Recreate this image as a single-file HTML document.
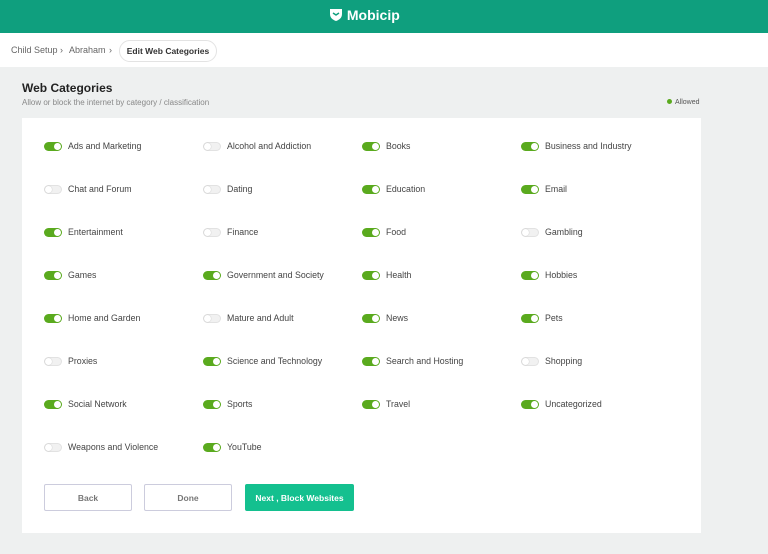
<!DOCTYPE html>
<html><head><style>
body{margin:0;width:768px;height:554px;background:#eef0f0;font-family:"Liberation Sans",sans-serif;position:relative;overflow:hidden}
.hd{position:absolute;left:0;top:0;width:768px;height:33px;background:#0f9f7e}
.logo{position:absolute;left:329px;top:7px;color:#fff;font-weight:bold;font-size:14px}
.bc{position:absolute;left:0;top:33px;width:768px;height:34px;background:#fff}
.bc span{position:absolute;top:12px;font-size:9px;color:#666}
.pill{position:absolute;left:119px;top:7px;width:96px;height:20px;border:1px solid #e3e3e3;border-radius:11px;font-size:8.5px;font-weight:bold;color:#333;text-align:center;line-height:20px}
h1{position:absolute;left:22px;top:81px;margin:0;font-size:12px;color:#222}
.sub{position:absolute;left:22px;top:98px;font-size:8px;color:#888}
.al{position:absolute;left:667px;top:99px;font-size:7px;color:#555}
.al:before{content:"";display:inline-block;width:5px;height:5px;border-radius:50%;background:#5aaa1e;margin-right:3px}
.card{position:absolute;left:22px;top:118px;width:679px;height:415px;background:#fff}
.it{position:absolute;font-size:8.8px;color:#444;height:12px;line-height:11px}
.t{position:absolute;left:-24px;top:1px;width:18px;height:9px;border-radius:5px;background:#5aaa1e}
.t:after{content:"";position:absolute;right:1px;top:1px;width:7px;height:7px;border-radius:50%;background:#fff}
.off{background:#f1f1f1;border:1px solid #e2e2e2;width:16px;height:7px}
.off:after{left:0;top:0;right:auto;box-shadow:0 0 1px #aaa}
.btn{position:absolute;top:484px;height:27px;line-height:27px;text-align:center;font-size:8.5px;font-weight:bold;border:1px solid #ccd;border-radius:2px;color:#777;background:#fff;box-sizing:border-box}
</style></head><body>
<div class="hd"><div class="logo"><svg width="14" height="13" style="vertical-align:-1px" viewBox="0 0 14 13"><path d="M1 1h12v5c0 4-3 6-6 7C4 12 1 10 1 6z" fill="#fff"/><path d="M4 5l3 2 3-2" stroke="#0f9f7e" stroke-width="1.5" fill="none"/></svg> Mobicip</div></div>
<div class="bc"><span style="left:11px">Child Setup</span><span style="left:60px">›</span><span style="left:69px">Abraham</span><span style="left:109px">›</span><div class="pill">Edit Web Categories</div></div>
<h1>Web Categories</h1>
<div class="sub">Allow or block the internet by category / classification</div>
<div class="al">Allowed</div>
<div class="card"></div>
<div class="it" style="left:68px;top:141px"><i class="t"></i>Ads and Marketing</div>
<div class="it" style="left:227px;top:141px"><i class="t off"></i>Alcohol and Addiction</div>
<div class="it" style="left:386px;top:141px"><i class="t"></i>Books</div>
<div class="it" style="left:545px;top:141px"><i class="t"></i>Business and Industry</div>
<div class="it" style="left:68px;top:184px"><i class="t off"></i>Chat and Forum</div>
<div class="it" style="left:227px;top:184px"><i class="t off"></i>Dating</div>
<div class="it" style="left:386px;top:184px"><i class="t"></i>Education</div>
<div class="it" style="left:545px;top:184px"><i class="t"></i>Email</div>
<div class="it" style="left:68px;top:227px"><i class="t"></i>Entertainment</div>
<div class="it" style="left:227px;top:227px"><i class="t off"></i>Finance</div>
<div class="it" style="left:386px;top:227px"><i class="t"></i>Food</div>
<div class="it" style="left:545px;top:227px"><i class="t off"></i>Gambling</div>
<div class="it" style="left:68px;top:270px"><i class="t"></i>Games</div>
<div class="it" style="left:227px;top:270px"><i class="t"></i>Government and Society</div>
<div class="it" style="left:386px;top:270px"><i class="t"></i>Health</div>
<div class="it" style="left:545px;top:270px"><i class="t"></i>Hobbies</div>
<div class="it" style="left:68px;top:313px"><i class="t"></i>Home and Garden</div>
<div class="it" style="left:227px;top:313px"><i class="t off"></i>Mature and Adult</div>
<div class="it" style="left:386px;top:313px"><i class="t"></i>News</div>
<div class="it" style="left:545px;top:313px"><i class="t"></i>Pets</div>
<div class="it" style="left:68px;top:356px"><i class="t off"></i>Proxies</div>
<div class="it" style="left:227px;top:356px"><i class="t"></i>Science and Technology</div>
<div class="it" style="left:386px;top:356px"><i class="t"></i>Search and Hosting</div>
<div class="it" style="left:545px;top:356px"><i class="t off"></i>Shopping</div>
<div class="it" style="left:68px;top:399px"><i class="t"></i>Social Network</div>
<div class="it" style="left:227px;top:399px"><i class="t"></i>Sports</div>
<div class="it" style="left:386px;top:399px"><i class="t"></i>Travel</div>
<div class="it" style="left:545px;top:399px"><i class="t"></i>Uncategorized</div>
<div class="it" style="left:68px;top:442px"><i class="t off"></i>Weapons and Violence</div>
<div class="it" style="left:227px;top:442px"><i class="t"></i>YouTube</div>
<div class="btn" style="left:44px;width:88px">Back</div>
<div class="btn" style="left:144px;width:88px">Done</div>
<div class="btn" style="left:245px;width:109px;background:#14c08f;border-color:#14c08f;color:#fff">Next , Block Websites</div>
</body></html>
